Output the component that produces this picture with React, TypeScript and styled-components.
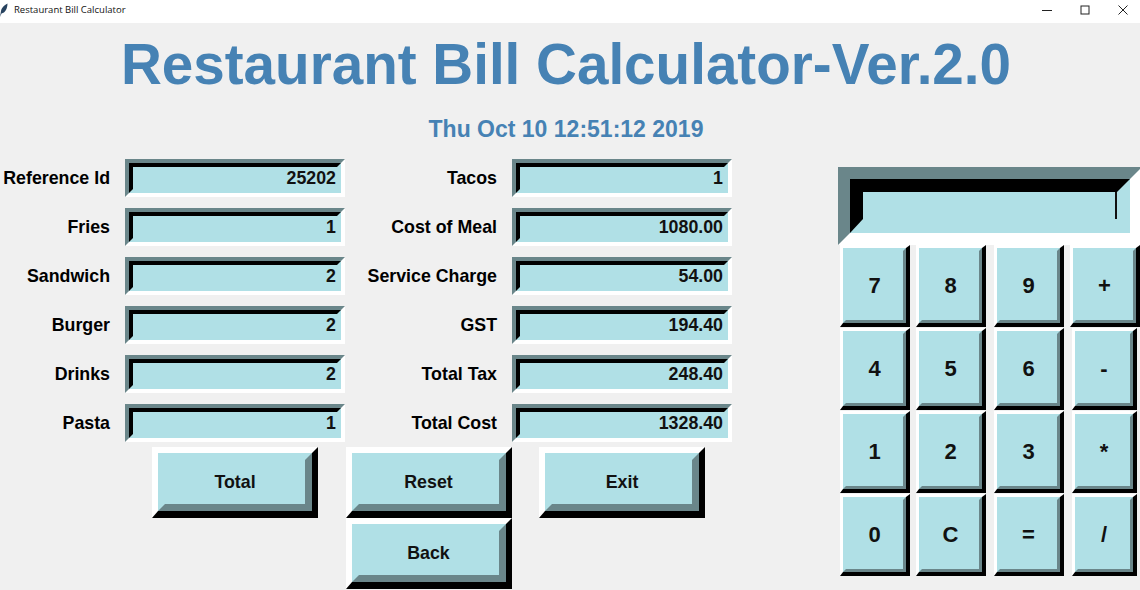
import React from "react";
import styled, { createGlobalStyle } from "styled-components";

const POWDER = "#b0e0e6";
const SHADE = "#6a868a";

const GlobalStyle = createGlobalStyle`
	html, body {
		margin: 0;
		padding: 0;
		overflow: hidden;
		background: #f0f0f0;
	}
`;

const Window = styled.div`
	width: 1140px;
	height: 590px;
	overflow: hidden;
	background: #f0f0f0;
	font-family: "Liberation Sans", Arial, sans-serif;
	color: #000;
`;

const TitleBar = styled.div`
	height: 23px;
	box-sizing: border-box;
	padding-bottom: 4px;
	background: #fff;
	display: flex;
	align-items: center;
`;

const AppName = styled.span`
	font-family: "Open Sans", "Noto Sans", sans-serif;
	font-size: 9.5px;
	color: #111;
	margin-left: 6px;
`;

const WindowButtons = styled.div`
	margin-left: auto;
	display: flex;
	align-items: center;
`;

const WindowButton = styled.div`
	width: 38px;
	height: 19px;
	box-sizing: border-box;
	padding-left: 3px;
	display: flex;
	align-items: center;
	justify-content: center;
`;

const Heading = styled.h1`
	margin: 0;
	padding-top: 10px;
	padding-right: 8px;
	height: 63px;
	text-align: center;
	font-size: 56.6px;
	line-height: 63px;
	font-weight: 700;
	color: #4682b4;
`;

const DateLine = styled.div`
	margin-top: 20px;
	padding-right: 8px;
	height: 27px;
	text-align: center;
	font-size: 23px;
	line-height: 27px;
	font-weight: 700;
	color: #4682b4;
`;

const Content = styled.div`
	margin-top: 16px;
	display: flex;
`;

const LeftPanel = styled.div`
	width: 838px;
	flex: none;
`;

const Form = styled.div`
	display: grid;
	grid-template-columns: 110px 220px 137px 220px;
	column-gap: 15px;
	row-gap: 11px;
	width: max-content;
`;

const Label = styled.label`
	height: 38px;
	display: flex;
	align-items: center;
	justify-content: flex-end;
	font-size: 17.8px;
	font-weight: 700;
	white-space: nowrap;
	padding-top: 1px;
	box-sizing: border-box;
`;

const Entry = styled.div`
	height: 38px;
	box-sizing: border-box;
	border-style: solid;
	border-width: 4px;
	border-color: ${SHADE} #fff #fff ${SHADE};
`;

const EntryInner = styled.div`
	height: 100%;
	box-sizing: border-box;
	border-style: solid;
	border-width: 4px;
	border-color: #000 ${POWDER} ${POWDER} #000;
	background: ${POWDER};
	display: flex;
	align-items: center;
	justify-content: flex-end;
	font-size: 17.8px;
	font-weight: 700;
	padding-right: 1px;
	color: #111;
`;

const Actions = styled.div`
	margin-left: 152px;
	margin-top: 5px;
	display: grid;
	grid-template-columns: repeat(3, 166px);
	column-gap: 27.5px;
`;

const ActionOuter = styled.div<{ $col: number; $row: number }>`
	grid-column: ${(p) => p.$col};
	grid-row: ${(p) => p.$row};
	height: 71px;
	box-sizing: border-box;
	border-style: solid;
	border-width: 6px 6px 7px 6px;
	border-color: #fff #000 #000 #fff;
`;

const ActionInner = styled.button`
	display: flex;
	align-items: center;
	justify-content: center;
	width: 100%;
	height: 100%;
	padding: 0;
	box-sizing: border-box;
	border-style: solid;
	border-width: 7px;
	border-color: ${POWDER} ${SHADE} ${SHADE} ${POWDER};
	background: ${POWDER};
	font-family: inherit;
	font-size: 17.8px;
	font-weight: 700;
	color: #111;
`;

const CalcPanel = styled.div`
	margin-top: 8px;
	flex: none;
	width: 302px;
`;

const Display = styled.div`
	width: 304px;
	height: 78px;
	box-sizing: border-box;
	border-style: solid;
	border-width: 12px;
	border-color: ${SHADE} #fff #fff ${SHADE};
`;

const DisplayInner = styled.div`
	position: relative;
	height: 100%;
	box-sizing: border-box;
	border-style: solid;
	border-width: 13px 13px 14px 13px;
	border-color: #000 ${POWDER} ${POWDER} #000;
	background: ${POWDER};

	&::after {
		content: "";
		position: absolute;
		left: 252px;
		top: 0;
		width: 2px;
		height: 27px;
		background: #111;
	}
`;

const Keypad = styled.div`
	padding-left: 2px;
	display: grid;
	grid-template-columns: 76px 78px 76px 70px;
	grid-auto-rows: 82px;
	row-gap: 1px;
`;

const KeyOuter = styled.div<{ $narrow?: boolean }>`
	width: ${(p) => (p.$narrow ? "65px" : "70px")};
	margin-left: ${(p) => (p.$narrow ? "2px" : "0")};
	box-sizing: border-box;
	border-style: solid;
	border-width: 3px 4px 4px 3px;
	border-color: #fff #000 #000 #fff;
`;

const KeyInner = styled.button`
	display: flex;
	align-items: center;
	justify-content: center;
	width: 100%;
	height: 100%;
	padding: 0;
	box-sizing: border-box;
	border-style: solid;
	border-width: 3px;
	border-color: ${POWDER} ${SHADE} ${SHADE} ${POWDER};
	background: ${POWDER};
	font-family: inherit;
	font-size: 22px;
	font-weight: 700;
	color: #111;
`;

const rows = [
	["Reference Id", "25202", "Tacos", "1"],
	["Fries", "1", "Cost of Meal", "1080.00"],
	["Sandwich", "2", "Service Charge", "54.00"],
	["Burger", "2", "GST", "194.40"],
	["Drinks", "2", "Total Tax", "248.40"],
	["Pasta", "1", "Total Cost", "1328.40"],
];

const actions = [
	{ text: "Total", col: 1, row: 1 },
	{ text: "Reset", col: 2, row: 1 },
	{ text: "Exit", col: 3, row: 1 },
	{ text: "Back", col: 2, row: 2 },
];

const keys = ["7", "8", "9", "+", "4", "5", "6", "-", "1", "2", "3", "*", "0", "C", "=", "/"];

const Feather = () => (
	<svg width="8" height="14" viewBox="0 0 8 14">
		<path d="M0 14 L1 8 Q2 3 7.5 0.5 Q7.5 6 4 9.5 L1.5 10.5 Z" fill="#27425f" />
	</svg>
);

const App = () => {
	return (
		<Window>
			<GlobalStyle />
			<TitleBar>
				<Feather />
				<AppName>Restaurant Bill Calculator</AppName>
				<WindowButtons>
					<WindowButton>
						<svg width="10" height="10" viewBox="0 0 10 10">
							<path d="M0 5.5H10" stroke="#222" fill="none" />
						</svg>
					</WindowButton>
					<WindowButton>
						<svg width="10" height="10" viewBox="0 0 10 10">
							<rect x="1" y="1" width="8" height="8" stroke="#222" fill="none" />
						</svg>
					</WindowButton>
					<WindowButton>
						<svg width="10" height="10" viewBox="0 0 10 10">
							<path d="M0.5 0.5L9.5 9.5M9.5 0.5L0.5 9.5" stroke="#222" fill="none" />
						</svg>
					</WindowButton>
				</WindowButtons>
			</TitleBar>
			<Heading>Restaurant Bill Calculator-Ver.2.0</Heading>
			<DateLine>Thu Oct 10 12:51:12 2019</DateLine>
			<Content>
				<LeftPanel>
					<Form>
						{rows.map((r) => (
							<React.Fragment key={r[0]}>
								<Label>{r[0]}</Label>
								<Entry>
									<EntryInner>{r[1]}</EntryInner>
								</Entry>
								<Label>{r[2]}</Label>
								<Entry>
									<EntryInner>{r[3]}</EntryInner>
								</Entry>
							</React.Fragment>
						))}
					</Form>
					<Actions>
						{actions.map((a) => (
							<ActionOuter key={a.text} $col={a.col} $row={a.row}>
								<ActionInner>{a.text}</ActionInner>
							</ActionOuter>
						))}
					</Actions>
				</LeftPanel>
				<CalcPanel>
					<Display>
						<DisplayInner />
					</Display>
					<Keypad>
						{keys.map((k, i) => (
							<KeyOuter key={k} $narrow={i % 4 === 3 && i > 3}>
								<KeyInner>{k}</KeyInner>
							</KeyOuter>
						))}
					</Keypad>
				</CalcPanel>
			</Content>
		</Window>
	);
};

export default App;
